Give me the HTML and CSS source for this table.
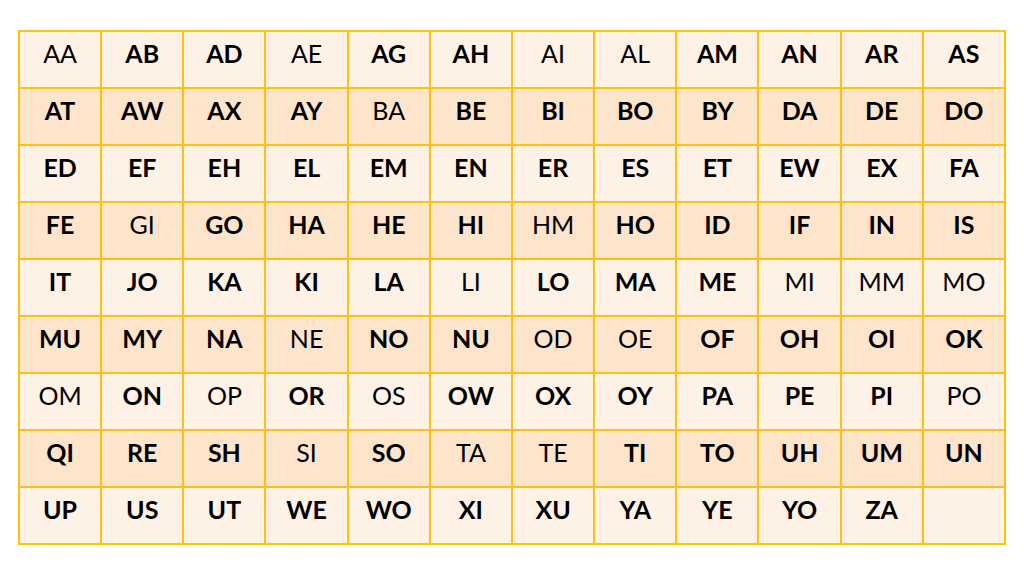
FILE: index.html
```html
<!DOCTYPE html>
<html>
<head>
<meta charset="utf-8">
<link rel="stylesheet" href="styles.css">
</head>
<body>
<div class="board">
  <div class="row"><span class="cell">AA</span><span class="cell b">AB</span><span class="cell b">AD</span><span class="cell">AE</span><span class="cell b">AG</span><span class="cell b">AH</span><span class="cell">AI</span><span class="cell">AL</span><span class="cell b">AM</span><span class="cell b">AN</span><span class="cell b">AR</span><span class="cell b">AS</span></div>
  <div class="row"><span class="cell b">AT</span><span class="cell b">AW</span><span class="cell b">AX</span><span class="cell b">AY</span><span class="cell">BA</span><span class="cell b">BE</span><span class="cell b">BI</span><span class="cell b">BO</span><span class="cell b">BY</span><span class="cell b">DA</span><span class="cell b">DE</span><span class="cell b">DO</span></div>
  <div class="row"><span class="cell b">ED</span><span class="cell b">EF</span><span class="cell b">EH</span><span class="cell b">EL</span><span class="cell b">EM</span><span class="cell b">EN</span><span class="cell b">ER</span><span class="cell b">ES</span><span class="cell b">ET</span><span class="cell b">EW</span><span class="cell b">EX</span><span class="cell b">FA</span></div>
  <div class="row"><span class="cell b">FE</span><span class="cell">GI</span><span class="cell b">GO</span><span class="cell b">HA</span><span class="cell b">HE</span><span class="cell b">HI</span><span class="cell">HM</span><span class="cell b">HO</span><span class="cell b">ID</span><span class="cell b">IF</span><span class="cell b">IN</span><span class="cell b">IS</span></div>
  <div class="row"><span class="cell b">IT</span><span class="cell b">JO</span><span class="cell b">KA</span><span class="cell b">KI</span><span class="cell b">LA</span><span class="cell">LI</span><span class="cell b">LO</span><span class="cell b">MA</span><span class="cell b">ME</span><span class="cell">MI</span><span class="cell">MM</span><span class="cell">MO</span></div>
  <div class="row"><span class="cell b">MU</span><span class="cell b">MY</span><span class="cell b">NA</span><span class="cell">NE</span><span class="cell b">NO</span><span class="cell b">NU</span><span class="cell">OD</span><span class="cell">OE</span><span class="cell b">OF</span><span class="cell b">OH</span><span class="cell b">OI</span><span class="cell b">OK</span></div>
  <div class="row"><span class="cell">OM</span><span class="cell b">ON</span><span class="cell">OP</span><span class="cell b">OR</span><span class="cell">OS</span><span class="cell b">OW</span><span class="cell b">OX</span><span class="cell b">OY</span><span class="cell b">PA</span><span class="cell b">PE</span><span class="cell b">PI</span><span class="cell">PO</span></div>
  <div class="row"><span class="cell b">QI</span><span class="cell b">RE</span><span class="cell b">SH</span><span class="cell">SI</span><span class="cell b">SO</span><span class="cell">TA</span><span class="cell">TE</span><span class="cell b">TI</span><span class="cell b">TO</span><span class="cell b">UH</span><span class="cell b">UM</span><span class="cell b">UN</span></div>
  <div class="row"><span class="cell b">UP</span><span class="cell b">US</span><span class="cell b">UT</span><span class="cell b">WE</span><span class="cell b">WO</span><span class="cell b">XI</span><span class="cell b">XU</span><span class="cell b">YA</span><span class="cell b">YE</span><span class="cell b">YO</span><span class="cell b">ZA</span><span class="cell"></span></div>
</div>
</body>
</html>
```
FILE: styles.css
```css
html, body {
  margin: 0;
  padding: 0;
  background: #ffffff;
}
body {
  padding: 30px 0 0 18px;
  font-family: Lato, "Open Sans", sans-serif;
}
.board {
  width: 988px;
  height: 515px;
  box-sizing: border-box;
  background: #FFC20A;
  padding: 2px;
  display: flex;
  flex-direction: column;
  gap: 2px;
}
.row {
  flex: 1;
  display: grid;
  grid-template-columns: repeat(12, 1fr);
  gap: 2px;
}
.cell {
  display: flex;
  align-items: center;
  justify-content: center;
  background: #FEF1E6;
  color: #000;
  font-size: 25px;
  font-weight: 400;
  line-height: 1;
  padding-bottom: 13px;
}
.row:nth-child(even) .cell {
  background: #FDE5CB;
}
.cell.b {
  font-weight: 700;
}
```
